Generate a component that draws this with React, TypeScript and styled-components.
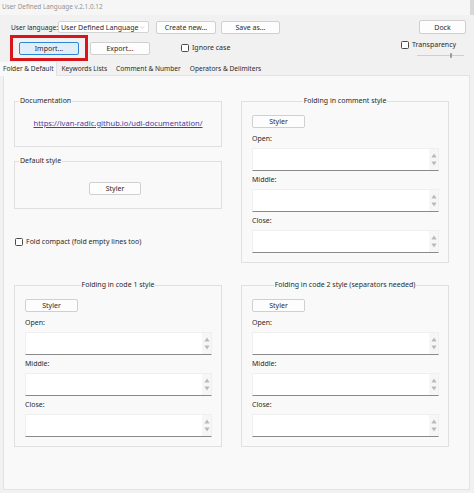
import React from 'react'
import styled, { createGlobalStyle } from 'styled-components'
import { ChevronDown } from 'lucide-react'

const GlobalStyle = createGlobalStyle`
  html, body {
    margin: 0;
    padding: 0;
    background: #f1f1f1;
  }
  body {
    font-family: 'Noto Sans', 'Open Sans', sans-serif;
    -webkit-font-smoothing: antialiased;
  }
`

const Spinner = () => (
  <S.Spin>
    <svg width='6' height='5' viewBox='0 0 6 5'>
      <path d='M3 0.5 L5.6 4.5 L0.4 4.5 Z' fill='#b9b9b9' />
    </svg>
    <svg width='6' height='5' viewBox='0 0 6 5'>
      <path d='M0.4 0.5 L5.6 0.5 L3 4.5 Z' fill='#b9b9b9' />
    </svg>
  </S.Spin>
)

const Field = ({ label }: { label: string }) => (
  <S.Field>
    <S.FieldLabel>{label}</S.FieldLabel>
    <S.TextArea>
      <Spinner />
    </S.TextArea>
  </S.Field>
)

const FoldingGroup = ({ title }: { title: string }) => (
  <S.Group>
    <S.Legend $center>{title}</S.Legend>
    <S.FoldBody>
      <S.Button $w={53}>Styler</S.Button>
      <Field label='Open:' />
      <Field label='Middle:' />
      <Field label='Close:' />
    </S.FoldBody>
  </S.Group>
)

export default function App() {
  return (
    <>
      <GlobalStyle />
      <S.Window>
        <S.TitleBar>
          <S.Title>User Defined Language v.2.1.0.12</S.Title>
          <S.ScrollStub />
        </S.TitleBar>

        <S.Toolbar>
          <S.Row1>
            <S.Label>User language:</S.Label>
            <S.Combo>
              <span>User Defined Language</span>
              <ChevronDown size={7} color='#8a8a8a' strokeWidth={1.5} />
            </S.Combo>
            <S.Button $w={60} $ml={7}>Create new...</S.Button>
            <S.Button $w={59} $ml={5}>Save as...</S.Button>
            <S.Button $w={47} $ml='auto' $h={14}>Dock</S.Button>
          </S.Row1>

          <S.Row2>
            <S.Highlight>
              <S.Button $w={60} $primary>Import...</S.Button>
            </S.Highlight>
            <S.Button $w={60} $ml={2}>Export...</S.Button>
            <S.Check $ml={31}>
              <S.Box />
              Ignore case
            </S.Check>
            <S.Transparency>
              <S.Check>
                <S.Box />
                Transparency
              </S.Check>
              <S.Slider>
                <S.Thumb />
              </S.Slider>
            </S.Transparency>
          </S.Row2>
        </S.Toolbar>

        <S.Tabs>
          <S.Tab $active>Folder &amp; Default</S.Tab>
          <S.Tab>Keywords Lists</S.Tab>
          <S.Tab>Comment &amp; Number</S.Tab>
          <S.Tab>Operators &amp; Delimiters</S.Tab>
        </S.Tabs>

        <S.Panel>
          <S.Grid>
            <S.Stack>
              <S.Group>
                <S.Legend>Documentation</S.Legend>
                <S.DocBody>
                  <S.Link>https://ivan-radic.github.io/udl-documentation/</S.Link>
                </S.DocBody>
              </S.Group>
              <S.Group $mt={9}>
                <S.Legend>Default style</S.Legend>
                <S.StyleBody>
                  <S.Button $w={52}>Styler</S.Button>
                </S.StyleBody>
              </S.Group>
              <S.Check $mt={28} $ml={1}>
                <S.Box />
                Fold compact (fold empty lines too)
              </S.Check>
            </S.Stack>

            <FoldingGroup title='Folding in comment style' />
            <FoldingGroup title='Folding in code 1 style' />
            <FoldingGroup title='Folding in code 2 style (separators needed)' />
          </S.Grid>
        </S.Panel>
      </S.Window>
    </>
  )
}

const S = {
  Window: styled.div`
    width: 474px;
    height: 493px;
    display: flex;
    flex-direction: column;
    background: #f1f1f1;
    color: #2a2a2a;
    font-size: 7px;
    overflow: hidden;
  `,
  TitleBar: styled.div`
    display: flex;
    height: 15px;
    background: #f6f6f6;
  `,
  Title: styled.div`
    flex: 1;
    padding-left: 2px;
    line-height: 14px;
    color: #939393;
    font-size: 6.4px;
  `,
  ScrollStub: styled.div`
    width: 4px;
    background: #d8d8d8;
  `,
  Toolbar: styled.div`
    padding: 0 8px 0 10px;
  `,
  Row1: styled.div`
    display: flex;
    align-items: center;
    height: 14px;
    margin-top: 5px;
    padding-left: 1px;
  `,
  Row2: styled.div`
    display: flex;
    align-items: center;
    height: 26px;
    margin-top: 1px;
  `,
  Label: styled.span`
    font-size: 6.6px;
    white-space: nowrap;
  `,
  Combo: styled.div`
    width: 91px;
    height: 12px;
    box-sizing: border-box;
    display: flex;
    align-items: center;
    justify-content: space-between;
    padding: 0 3px 0 2px;
    background: #fff;
    border: 1px solid #d4d4d4;
    border-radius: 2px;
    white-space: nowrap;
  `,
  Button: styled.div<{ $w: number; $ml?: number | 'auto'; $h?: number; $primary?: boolean }>`
    width: ${p => p.$w}px;
    height: ${p => p.$h || 13}px;
    margin-left: ${p => (p.$ml === 'auto' ? 'auto' : `${p.$ml || 0}px`)};
    box-sizing: border-box;
    display: flex;
    align-items: center;
    justify-content: center;
    flex-shrink: 0;
    background: ${p => (p.$primary ? '#e1eefa' : '#fdfdfd')};
    border: 1px solid ${p => (p.$primary ? '#2d86d6' : '#d0d0d0')};
    border-radius: 2px;
    white-space: nowrap;
  `,
  Highlight: styled.div`
    width: 78px;
    height: 26px;
    box-sizing: border-box;
    display: flex;
    align-items: center;
    justify-content: center;
    border: 3px solid #d7151c;
  `,
  Check: styled.div<{ $ml?: number; $mt?: number }>`
    display: flex;
    align-items: center;
    gap: 3px;
    margin-left: ${p => p.$ml || 0}px;
    margin-top: ${p => p.$mt || 0}px;
    line-height: 10px;
    white-space: nowrap;
  `,
  Box: styled.span`
    width: 8px;
    height: 8px;
    box-sizing: border-box;
    border: 1px solid #4a4a4a;
    border-radius: 1.5px;
    background: #fff;
  `,
  Transparency: styled.div`
    margin-left: auto;
    width: 65px;
    align-self: flex-start;
    padding-top: 5px;
  `,
  Slider: styled.div`
    position: relative;
    margin: 5px 0 0 16px;
    width: 47px;
    height: 1px;
    background: #cfcfcf;
  `,
  Thumb: styled.span`
    position: absolute;
    left: 33px;
    top: -2px;
    width: 2px;
    height: 5px;
    background: #9a9a9a;
    border-radius: 1px;
  `,
  Tabs: styled.div`
    display: flex;
    height: 13px;
    margin-top: 1px;
    font-size: 6.6px;
  `,
  Tab: styled.div<{ $active?: boolean }>`
    padding: ${p => (p.$active ? '0 2px 0 3px' : '0 3px')};
    line-height: 13px;
    white-space: nowrap;
    box-sizing: border-box;
    background: ${p => (p.$active ? '#f9f9f9' : 'transparent')};
    border-right: 1px solid ${p => (p.$active ? '#e2e2e2' : 'transparent')};
    margin-right: 2px;
    position: relative;
    z-index: 1;
    height: ${p => (p.$active ? '14px' : '13px')};
  `,
  Panel: styled.div`
    flex: 1;
    margin: 0 4px 3px 3px;
    background: #f9f9f9;
    border: 1px solid #e3e3e3;
    padding: 20px 0 0 10px;
  `,
  Grid: styled.div`
    display: grid;
    grid-template-columns: 208px 208px;
    column-gap: 19px;
    row-gap: 17px;
    align-items: start;
  `,
  Stack: styled.div`
    display: flex;
    flex-direction: column;
  `,
  Group: styled.fieldset<{ $mt?: number }>`
    margin: ${p => p.$mt || 0}px 0 0 0;
    padding: 0;
    min-width: 0;
    border: 1px solid #e0e0e0;
  `,
  Legend: styled.legend<{ $center?: boolean }>`
    padding: 0 1px;
    line-height: 10px;
    margin: ${p => (p.$center ? '0 auto' : '0 0 0 4px')};
    color: #2a2a2a;
  `,
  DocBody: styled.div`
    padding: 12px 0 17px;
    text-align: center;
    line-height: 10px;
  `,
  Link: styled.span`
    color: #4b3c9e;
    text-decoration: underline;
    font-size: 7.6px;
  `,
  StyleBody: styled.div`
    display: flex;
    justify-content: center;
    padding: 16px 6px 13px 0;
  `,
  FoldBody: styled.div`
    padding: 9px 9px 9px 10px;
  `,
  Field: styled.div`
    margin-top: 4px;
    &:nth-of-type(2) {
      margin-top: 6px;
    }
  `,
  FieldLabel: styled.div`
    line-height: 10px;
    margin-bottom: 4px;
  `,
  TextArea: styled.div`
    height: 23px;
    box-sizing: border-box;
    display: flex;
    justify-content: flex-end;
    background: #fff;
    border: 1px solid #efefef;
    border-bottom-color: #8a8a8a;
  `,
  Spin: styled.div`
    width: 9px;
    display: flex;
    flex-direction: column;
    align-items: center;
    justify-content: space-around;
    padding: 2px 0;
    background: #f6f6f6;
  `
}
